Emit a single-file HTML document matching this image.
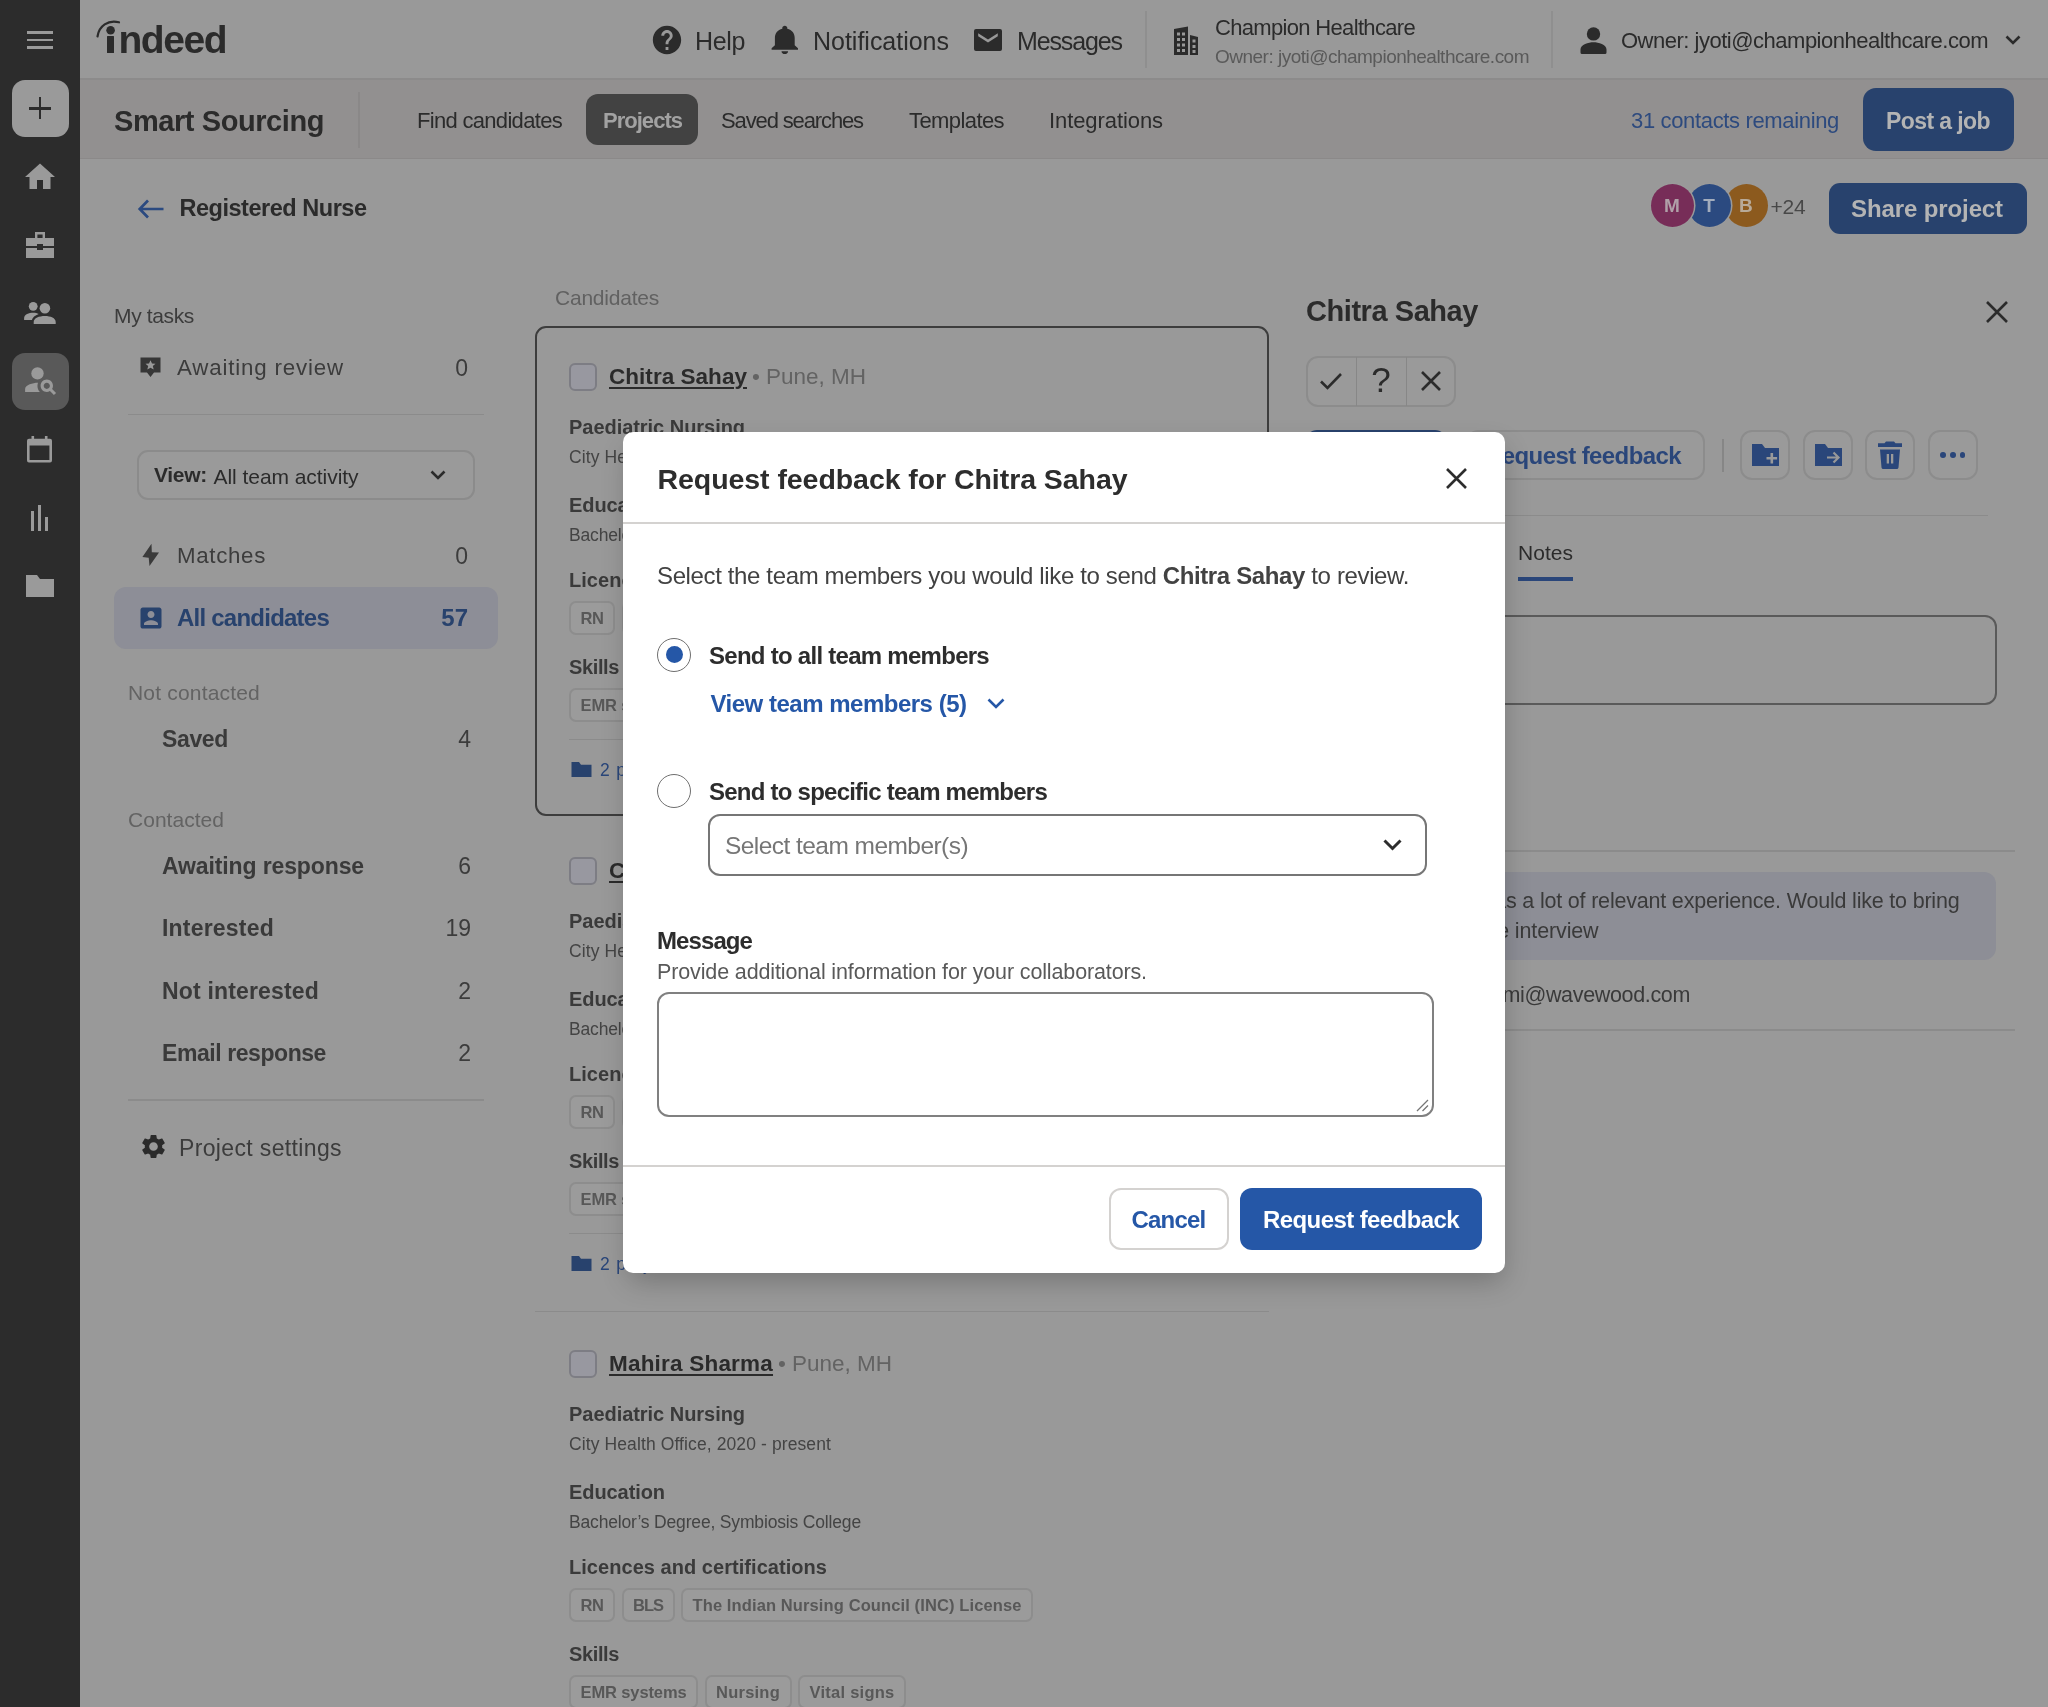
<!DOCTYPE html>
<html><head><meta charset="utf-8"><title>Smart Sourcing</title>
<style>
html,body{margin:0;padding:0}
html{width:2048px;height:1707px;overflow:hidden}
body{width:2048px;height:1707px;overflow:hidden;position:relative;background:#999999;font-family:"Liberation Sans", sans-serif;}
body div,body svg{position:absolute;box-sizing:border-box}
.t{white-space:nowrap}
#root{left:0;top:0;width:2048px;height:1707px;overflow:hidden;will-change:transform;}
</style></head><body><div id="root">
<div style="left:0px;top:0px;width:2048px;height:78px;background:#999999"></div>
<div style="left:80px;top:78px;width:1968px;height:2px;background:#8c8b8b"></div>
<div style="left:80px;top:80px;width:1968px;height:79px;background:#929090"></div>
<div style="left:80px;top:157.5px;width:1968px;height:1.5px;background:#8b8989"></div>
<div style="left:0px;top:0px;width:80px;height:1707px;background:#2c2c2c"></div>
<div style="left:27px;top:31px;width:26px;height:2.6px;background:#9a9a9a"></div>
<div style="left:27px;top:38.6px;width:26px;height:2.6px;background:#9a9a9a"></div>
<div style="left:27px;top:46px;width:26px;height:2.6px;background:#9a9a9a"></div>
<div style="left:11.5px;top:79.5px;width:57px;height:57px;background:#9a9a9a;border-radius:13px"></div>
<div style="left:29px;top:107px;width:22px;height:2.5px;background:#2c2c2c"></div>
<div style="left:38.8px;top:97px;width:2.5px;height:22px;background:#2c2c2c"></div>
<svg style="left:22px;top:159px;" width="36" height="36" viewBox="0 0 24 24"><path fill="#9a9a9a" d="M10 20v-6h4v6h5v-8h3L12 3 2 12h3v8z"/></svg>
<svg style="left:25px;top:231px;" width="30" height="28" viewBox="0 0 30 28"><path fill="#9a9a9a" d="M10 1h10v6h9v8h-11v-2h-6v2H1V7h9zM12.4 3.4V7h5.2V3.4zM1 17h11v2h6v-2h11v10H1z"/></svg>
<svg style="left:23px;top:300px;" width="34" height="26" viewBox="0 0 34 26"><circle cx="10.200" cy="6.300" r="4.400" fill="#9a9a9a"/><circle cx="21.900" cy="8.300" r="5.300" fill="#9a9a9a"/><path fill="#9a9a9a" d="M1.100 19.900v-1.500C1.100 14.500 6 12.800 10.200 12.800c2 0 4 .400 5.500 1.200C12 15.500 9.500 17.500 8.900 19.900zM10.700 24.100v-2.200c0-4 5.500-6 11.200-6s10.800 2 10.800 6v2.200z"/></svg>
<div style="left:11.5px;top:352.5px;width:57px;height:57px;background:#595959;border-radius:13px"></div>
<svg style="left:22.3px;top:360.6px;" width="37.2" height="37.2" viewBox="0 0 24 24"><circle cx="10" cy="8" r="4" fill="#9a9a9a"/><path fill="#9a9a9a" d="M10.35 14.01C7.62 13.91 2 15.27 2 18v2h9.54c-2.47-2.76-1.23-5.89-1.19-5.99zm9.08 4.01c.36-.59.57-1.28.57-2.02 0-2.21-1.79-4-4-4s-4 1.79-4 4 1.79 4 4 4c.74 0 1.43-.22 2.02-.57L20.59 22 22 20.59l-2.57-2.57zM16 18c-1.1 0-2-.9-2-2s.9-2 2-2 2 .9 2 2-.9 2-2 2z"/></svg>
<svg style="left:26px;top:436.3px;" width="27" height="26.5" viewBox="0 0 27 26.500"><path fill="#9a9a9a" fill-rule="evenodd" d="M5.500 0h2.600v2.800h10.800V0h2.600v2.800h2.500a2 2 0 0 1 2 2v19.700a2 2 0 0 1-2 2H3a2 2 0 0 1-2-2V4.800a2 2 0 0 1 2-2h2.500zM3.600 9.600v14.300h19.800V9.600z"/></svg>
<div style="left:31px;top:511px;width:3.4px;height:19.6px;background:#9a9a9a"></div>
<div style="left:38px;top:505px;width:3.4px;height:25.6px;background:#9a9a9a"></div>
<div style="left:45px;top:517px;width:3.4px;height:13.6px;background:#9a9a9a"></div>
<svg style="left:25px;top:574px;" width="30" height="24" viewBox="0 0 30 24"><path fill="#9a9a9a" d="M1 1h11l3 4h14v18H1z"/></svg>
<svg style="left:94px;top:16px;" width="136" height="44" viewBox="0 0 136 44">
<path d="M3.500 20.500 C5 10 14 3.500 25 6.300" fill="none" stroke="#2b2b2b" stroke-width="2.200" stroke-linecap="round"/>
<circle cx="16.600" cy="14.300" r="4.300" fill="#2b2b2b"/></svg>
<div style="left:107px;top:36.1px;width:7.3px;height:17px;background:#2b2b2b;border-radius:0.500px"></div>
<div class="t" style="left:118.5px;top:14.1px;font-size:39px;line-height:51px;color:#2b2b2b;font-weight:700;letter-spacing:-1.472px;">ndeed</div>
<svg style="left:649.8px;top:22.6px;" width="34" height="34" viewBox="0 0 24 24"><path fill="#2b2b2b" d="M12 2C6.48 2 2 6.48 2 12s4.48 10 10 10 10-4.48 10-10S17.52 2 12 2zm1 17h-2v-2h2v2zm2.07-7.75l-.9.92C13.45 12.9 13 13.5 13 15h-2v-.5c0-1.1.45-2.1 1.17-2.83l1.24-1.26c.37-.36.59-.86.59-1.41 0-1.1-.9-2-2-2s-2 .9-2 2H8c0-2.21 1.79-4 4-4s4 1.79 4 4c0 .88-.36 1.68-.93 2.25z"/></svg>
<div class="t" style="left:695.0px;top:24.5px;font-size:25px;line-height:32px;color:#2b2b2b;letter-spacing:-0.355px;">Help</div>
<svg style="left:765px;top:22px;" width="39.6" height="35" viewBox="0 0 24 24" preserveAspectRatio="none"><path fill="#2b2b2b" d="M12 22c1.1 0 2-.9 2-2h-4c0 1.1.89 2 2 2zm6-6v-5c0-3.07-1.64-5.64-4.5-6.32V4c0-.83-.67-1.5-1.5-1.5s-1.5.67-1.5 1.5v.68C7.63 5.36 6 7.920 6 11v5l-2 2v1h16v-1l-2-2z"/></svg>
<div class="t" style="left:813.0px;top:24.5px;font-size:25px;line-height:32px;color:#2b2b2b;letter-spacing:-0.013px;">Notifications</div>
<svg style="left:973px;top:28px;" width="30" height="24" viewBox="0 0 30 24"><path fill="#2b2b2b" d="M3 1h24a2 2 0 0 1 2 2v18a2 2 0 0 1-2 2H3a2 2 0 0 1-2-2V3a2 2 0 0 1 2-2zm2.2 4.2v3L15 14.5l9.8-6.3v-3L15 11.5z"/></svg>
<div class="t" style="left:1017.0px;top:24.5px;font-size:25px;line-height:32px;color:#2b2b2b;letter-spacing:-1.119px;">Messages</div>
<div style="left:1145px;top:11px;width:2px;height:57px;background:#8f8f8f"></div>
<svg style="left:1173px;top:26px;" width="26" height="30" viewBox="0 0 26 30"><path fill="#2b2b2b" fill-rule="evenodd" d="M1 3l14-2.5V29H1zM4 6.5h3v3H4zm5 0h3v3H9zM4 12h3v3H4zm5 0h3v3H9zM4 17.500h3v3H4zm5 0h3v3H9zM4 23h3v3H4zm5 0h3v3H9zM17 9l8 2v18h-8zm2.500 4.500h3v3h-3zm0 5.500h3v3h-3zm0 5h3v3h-3z"/></svg>
<div class="t" style="left:1215.0px;top:12.5px;font-size:22px;line-height:29px;color:#2b2b2b;letter-spacing:-0.673px;">Champion Healthcare</div>
<div class="t" style="left:1215.0px;top:44.0px;font-size:19px;line-height:25px;color:#5a5a5a;letter-spacing:-0.511px;">Owner: jyoti@championhealthcare.com</div>
<div style="left:1551px;top:11px;width:2px;height:57px;background:#8f8f8f"></div>
<svg style="left:1579.5px;top:26.5px;" width="27" height="27" viewBox="0 0 27 27"><circle cx="13.500" cy="6.900" r="6.700" fill="#2b2b2b"/><path fill="#2b2b2b" d="M0.500 25.500v-3c0-5 8-7.200 13-7.200s13 2.200 13 7.200v3a1.500 1.500 0 0 1-1.500 1.500h-23a1.500 1.500 0 0 1-1.500-1.500z"/></svg>
<div class="t" style="left:1621.0px;top:26.0px;font-size:22px;line-height:29px;color:#2b2b2b;letter-spacing:-0.494px;">Owner: jyoti@championhealthcare.com</div>
<svg style="left:2004px;top:34px;" width="18" height="12" viewBox="0 0 18 12"><path d="M2.500 2.500l6.500 6.500 6.500-6.500" fill="none" stroke="#2b2b2b" stroke-width="2.6"/></svg>
<div class="t" style="left:114.0px;top:101.5px;font-size:29px;line-height:38px;color:#2b2b2b;font-weight:700;letter-spacing:-0.424px;">Smart Sourcing</div>
<div style="left:358px;top:92px;width:2px;height:56px;background:#8a8888"></div>
<div class="t" style="left:417.0px;top:105.5px;font-size:22px;line-height:29px;color:#2b2b2b;letter-spacing:-0.689px;">Find candidates</div>
<div style="left:586px;top:94px;width:112px;height:51px;background:#424242;border-radius:12px"></div>
<div class="t" style="left:603.0px;top:105.5px;font-size:22px;line-height:29px;color:#a2a2a2;font-weight:700;letter-spacing:-0.979px;">Projects</div>
<div class="t" style="left:721.0px;top:105.5px;font-size:22px;line-height:29px;color:#2b2b2b;letter-spacing:-1.126px;">Saved searches</div>
<div class="t" style="left:909.0px;top:105.5px;font-size:22px;line-height:29px;color:#2b2b2b;letter-spacing:-0.587px;">Templates</div>
<div class="t" style="left:1049.0px;top:105.5px;font-size:22px;line-height:29px;color:#2b2b2b;letter-spacing:-0.081px;">Integrations</div>
<div class="t" style="left:1631.0px;top:105.5px;font-size:22px;line-height:29px;color:#2d4a7e;letter-spacing:-0.344px;">31 contacts remaining</div>
<div style="left:1863px;top:88px;width:151px;height:63px;background:#28426d;border-radius:13px"></div>
<div class="t" style="left:1886.0px;top:105.5px;font-size:23px;line-height:30px;color:#b4b4b4;font-weight:700;letter-spacing:-0.591px;">Post a job</div>
<svg style="left:136px;top:196.5px;" width="30" height="24" viewBox="0 0 30 24"><path d="M27.500 12H4M12 3.500L3.700 12l8.300 8.500" fill="none" stroke="#2b4a80" stroke-width="2.700"/></svg>
<div class="t" style="left:179.5px;top:193.3px;font-size:23.5px;line-height:31px;color:#2b2b2b;font-weight:700;letter-spacing:-0.476px;">Registered Nurse</div>
<div style="left:1724.8px;top:184px;width:43px;height:43px;background:#8c5a1e;border-radius:50%"></div>
<div style="left:1688px;top:184px;width:43px;height:43px;background:#2b4a80;border-radius:50%;box-shadow:0 0 0 1.500px #9a9a9a"></div>
<div style="left:1651px;top:184px;width:43px;height:43px;background:#772d58;border-radius:50%;box-shadow:0 0 0 1.500px #9a9a9a"></div>
<div class="t" style="left:1664.1px;top:193.0px;font-size:19px;line-height:25px;color:#b0a0a8;font-weight:700;">M</div>
<div class="t" style="left:1703.2px;top:193.0px;font-size:19px;line-height:25px;color:#a3adbd;font-weight:700;">T</div>
<div class="t" style="left:1739.1px;top:193.0px;font-size:19px;line-height:25px;color:#b8aa98;font-weight:700;">B</div>
<div class="t" style="left:1770.5px;top:193.0px;font-size:21px;line-height:27px;color:#484848;letter-spacing:-0.208px;">+24</div>
<div style="left:1829px;top:183px;width:198px;height:51px;background:#28426d;border-radius:11px"></div>
<div class="t" style="left:1851.0px;top:193.0px;font-size:24px;line-height:31px;color:#b4b4b4;font-weight:700;letter-spacing:-0.107px;">Share project</div>
<div class="t" style="left:114.0px;top:302.0px;font-size:21px;line-height:27px;color:#3c3c3c;letter-spacing:-0.355px;">My tasks</div>
<svg style="left:139px;top:356px;" width="23" height="23" viewBox="0 0 23 23"><path fill="#363636" fill-rule="evenodd" d="M1.500 1.500h20v15h-6.500l-3.500 4.500-3.500-4.500H1.500zM11.500 4.200l1.500 3.300 3.500.3-2.700 2.300.9 3.500-3.200-1.900-3.200 1.900.9-3.500-2.700-2.300 3.500-.3z"/></svg>
<div class="t" style="left:177.0px;top:353.3px;font-size:22.3px;line-height:29px;color:#3c3c3c;letter-spacing:0.833px;">Awaiting review</div>
<div class="t" style="left:455.2px;top:352.5px;font-size:23px;line-height:30px;color:#3c3c3c;">0</div>
<div style="left:128px;top:413.5px;width:356px;height:1.5px;background:#8b8b8b"></div>
<div style="left:137px;top:450px;width:338px;height:50px;border:2px solid #8b8b8b;border-radius:11px;background:#9a9a9a"></div>
<div class="t" style="left:154.0px;top:461.0px;font-size:21px;line-height:27px;color:#2b2b2b;font-weight:700;letter-spacing:-0.294px;">View:</div>
<div class="t" style="left:213.5px;top:462.5px;font-size:21px;line-height:27px;color:#2b2b2b;letter-spacing:-0.051px;">All team activity</div>
<svg style="left:429px;top:469px;" width="18" height="12" viewBox="0 0 18 12"><path d="M2.500 2.500l6.500 6.500 6.500-6.500" fill="none" stroke="#2b2b2b" stroke-width="2.600"/></svg>
<svg style="left:142px;top:543px;" width="18" height="24" viewBox="0 0 18 24"><path fill="#3a3a3a" d="M9.500 .800L.400 13.900l6.300.800.800 8.300L17 9.400l-7.200-.100z"/></svg>
<div class="t" style="left:177.0px;top:541.3px;font-size:22.3px;line-height:29px;color:#3c3c3c;letter-spacing:0.674px;">Matches</div>
<div class="t" style="left:455.2px;top:540.5px;font-size:23px;line-height:30px;color:#3c3c3c;">0</div>
<div style="left:114px;top:587px;width:384px;height:61.5px;background:#8d8e97;border-radius:12px"></div>
<svg style="left:136.7px;top:603.5px;" width="28" height="28" viewBox="0 0 24 24"><path fill="#28426d" d="M3 5v14c0 1.100.890 2 2 2h14c1.100 0 2-.900 2-2V5c0-1.100-.900-2-2-2H5c-1.110 0-2 .900-2 2zm12 4c0 1.660-1.340 3-3 3s-3-1.340-3-3 1.340-3 3-3 3 1.340 3 3zm-9 8c0-2 4-3.100 6-3.100s6 1.100 6 3.100v1H6v-1z"/></svg>
<div class="t" style="left:177.0px;top:602.0px;font-size:24px;line-height:31px;color:#28426d;font-weight:700;letter-spacing:-0.766px;">All candidates</div>
<div class="t" style="left:441.3px;top:602.0px;font-size:24px;line-height:31px;color:#28426d;font-weight:700;">57</div>
<div class="t" style="left:128.0px;top:679.0px;font-size:21px;line-height:27px;color:#636363;letter-spacing:0.185px;">Not contacted</div>
<div class="t" style="left:162.0px;top:723.5px;font-size:23px;line-height:30px;color:#3a3a3a;font-weight:700;letter-spacing:-0.353px;">Saved</div>
<div class="t" style="left:458.2px;top:723.5px;font-size:23px;line-height:30px;color:#3c3c3c;">4</div>
<div class="t" style="left:128.0px;top:805.5px;font-size:21px;line-height:27px;color:#636363;letter-spacing:0.030px;">Contacted</div>
<div class="t" style="left:162.0px;top:850.5px;font-size:23px;line-height:30px;color:#3a3a3a;font-weight:700;letter-spacing:-0.122px;">Awaiting response</div>
<div class="t" style="left:458.2px;top:850.5px;font-size:23px;line-height:30px;color:#3c3c3c;">6</div>
<div class="t" style="left:162.0px;top:913.0px;font-size:23px;line-height:30px;color:#3a3a3a;font-weight:700;letter-spacing:0.206px;">Interested</div>
<div class="t" style="left:445.4px;top:913.0px;font-size:23px;line-height:30px;color:#3c3c3c;">19</div>
<div class="t" style="left:162.0px;top:975.5px;font-size:23px;line-height:30px;color:#3a3a3a;font-weight:700;letter-spacing:0.169px;">Not interested</div>
<div class="t" style="left:458.2px;top:975.5px;font-size:23px;line-height:30px;color:#3c3c3c;">2</div>
<div class="t" style="left:162.0px;top:1038.0px;font-size:23px;line-height:30px;color:#3a3a3a;font-weight:700;letter-spacing:-0.431px;">Email response</div>
<div class="t" style="left:458.2px;top:1038.0px;font-size:23px;line-height:30px;color:#3c3c3c;">2</div>
<div style="left:128px;top:1099px;width:356px;height:1.5px;background:#8b8b8b"></div>
<svg style="left:139px;top:1132px;" width="29" height="29" viewBox="0 0 24 24"><path fill="#2b2b2b" d="M19.140 12.940c.040-.300.060-.610.060-.940 0-.320-.020-.640-.070-.940l2.030-1.580c.180-.140.230-.410.120-.610l-1.920-3.320c-.120-.220-.370-.290-.590-.220l-2.390.960c-.500-.380-1.030-.700-1.620-.940l-.360-2.540c-.040-.240-.240-.410-.480-.410h-3.840c-.240 0-.430.170-.470.410l-.360 2.540c-.590.240-1.130.570-1.620.940l-2.390-.960c-.220-.080-.470 0-.590.220L2.740 8.870c-.120.210-.080.470.120.610l2.030 1.580c-.050.300-.090.630-.090.940s.020.640.070.940l-2.030 1.580c-.180.140-.230.410-.120.610l1.920 3.320c.120.220.370.290.590.220l2.390-.960c.500.380 1.030.700 1.620.940l.360 2.540c.050.240.240.410.480.410h3.840c.240 0 .440-.170.470-.410l.360-2.540c.590-.240 1.130-.560 1.620-.940l2.390.960c.220.080.470 0 .590-.220l1.920-3.320c.120-.220.070-.470-.120-.610l-2.010-1.580zM12 15.600c-1.980 0-3.600-1.620-3.600-3.600s1.620-3.600 3.600-3.600 3.600 1.620 3.600 3.600-1.620 3.600-3.600 3.600z"/></svg>
<div class="t" style="left:179.0px;top:1132.5px;font-size:23px;line-height:30px;color:#3c3c3c;letter-spacing:0.359px;">Project settings</div>
<div class="t" style="left:555.0px;top:284.0px;font-size:21px;line-height:27px;color:#616161;letter-spacing:-0.225px;">Candidates</div>
<div style="left:535px;top:326px;width:734px;height:490px;border:2px solid #3d3d3d;border-radius:11px"></div>
<div style="left:569px;top:362.5px;width:28px;height:28px;border:2px solid #7d7d84;border-radius:6px;background:#9898a0"></div>
<div class="t" style="left:609.0px;top:361.5px;font-size:22.5px;line-height:29px;color:#2b2b2b;font-weight:700;letter-spacing:0.036px;text-decoration:underline;text-decoration-thickness:2px;text-underline-offset:3px;">Chitra Sahay</div>
<div class="t" style="left:752.0px;top:361.5px;font-size:22.5px;line-height:29px;color:#636363;letter-spacing:-0.017px;">• Pune, MH</div>
<div class="t" style="left:569.0px;top:413.5px;font-size:20px;line-height:26px;color:#3a3a3a;font-weight:700;letter-spacing:-0.040px;">Paediatric Nursing</div>
<div class="t" style="left:569.0px;top:446.0px;font-size:17.5px;line-height:23px;color:#444444;letter-spacing:0.105px;">City Health Office, 2020 - present</div>
<div class="t" style="left:569.0px;top:491.5px;font-size:20px;line-height:26px;color:#3a3a3a;font-weight:700;letter-spacing:-0.075px;">Education</div>
<div class="t" style="left:569.0px;top:524.0px;font-size:17.5px;line-height:23px;color:#444444;letter-spacing:-0.166px;">Bachelor’s Degree, Symbiosis College</div>
<div class="t" style="left:569.0px;top:567.0px;font-size:20px;line-height:26px;color:#3a3a3a;font-weight:700;letter-spacing:0.046px;">Licences and certifications</div>
<div style="left:569px;top:601.0px;width:46px;height:33.5px;border:2px solid #8d8d8d;border-radius:7px;background:#9b9b9b"></div>
<div class="t" style="left:580.5px;top:607.5px;font-size:16.5px;line-height:21px;color:#585858;font-weight:700;letter-spacing:-0.422px;">RN</div>
<div style="left:621.5px;top:601.0px;width:53px;height:33.5px;border:2px solid #8d8d8d;border-radius:7px;background:#9b9b9b"></div>
<div class="t" style="left:633.0px;top:607.5px;font-size:16.5px;line-height:21px;color:#585858;font-weight:700;letter-spacing:-1.000px;">BLS</div>
<div style="left:681.0px;top:601.0px;width:352px;height:33.5px;border:2px solid #8d8d8d;border-radius:7px;background:#9b9b9b"></div>
<div class="t" style="left:692.5px;top:607.5px;font-size:16.5px;line-height:21px;color:#585858;font-weight:700;letter-spacing:0.112px;">The Indian Nursing Council (INC) License</div>
<div class="t" style="left:569.0px;top:654.0px;font-size:20px;line-height:26px;color:#3a3a3a;font-weight:700;letter-spacing:-0.378px;">Skills</div>
<div style="left:569px;top:688.0px;width:129px;height:33.5px;border:2px solid #8d8d8d;border-radius:7px;background:#9b9b9b"></div>
<div class="t" style="left:580.5px;top:694.5px;font-size:16.5px;line-height:21px;color:#585858;font-weight:700;letter-spacing:-0.119px;">EMR systems</div>
<div style="left:704.5px;top:688.0px;width:87px;height:33.5px;border:2px solid #8d8d8d;border-radius:7px;background:#9b9b9b"></div>
<div class="t" style="left:716.0px;top:694.5px;font-size:16.5px;line-height:21px;color:#585858;font-weight:700;letter-spacing:0.237px;">Nursing</div>
<div style="left:798.0px;top:688.0px;width:108px;height:33.5px;border:2px solid #8d8d8d;border-radius:7px;background:#9b9b9b"></div>
<div class="t" style="left:809.5px;top:694.5px;font-size:16.5px;line-height:21px;color:#585858;font-weight:700;letter-spacing:0.251px;">Vital signs</div>
<div style="left:569px;top:738.5px;width:666px;height:1.5px;background:#8b8b8b"></div>
<svg style="left:571px;top:762.0px;" width="21" height="15" viewBox="0 0 21 15"><path fill="#28426d" d="M.500 0h7.500l2 2.800h10.500V15H.500z"/></svg>
<div class="t" style="left:600.0px;top:758.5px;font-size:17.5px;line-height:23px;color:#2a467a;letter-spacing:0.812px;">2 projects</div>
<div style="left:569px;top:856.5px;width:28px;height:28px;border:2px solid #7d7d84;border-radius:6px;background:#9898a0"></div>
<div class="t" style="left:609.0px;top:855.5px;font-size:22.5px;line-height:29px;color:#2b2b2b;font-weight:700;letter-spacing:0.036px;text-decoration:underline;text-decoration-thickness:2px;text-underline-offset:3px;">Chitra Sahay</div>
<div class="t" style="left:752.0px;top:855.5px;font-size:22.5px;line-height:29px;color:#636363;letter-spacing:-0.017px;">• Pune, MH</div>
<div class="t" style="left:569.0px;top:907.5px;font-size:20px;line-height:26px;color:#3a3a3a;font-weight:700;letter-spacing:-0.040px;">Paediatric Nursing</div>
<div class="t" style="left:569.0px;top:940.0px;font-size:17.5px;line-height:23px;color:#444444;letter-spacing:0.105px;">City Health Office, 2020 - present</div>
<div class="t" style="left:569.0px;top:985.5px;font-size:20px;line-height:26px;color:#3a3a3a;font-weight:700;letter-spacing:-0.075px;">Education</div>
<div class="t" style="left:569.0px;top:1018.0px;font-size:17.5px;line-height:23px;color:#444444;letter-spacing:-0.166px;">Bachelor’s Degree, Symbiosis College</div>
<div class="t" style="left:569.0px;top:1061.0px;font-size:20px;line-height:26px;color:#3a3a3a;font-weight:700;letter-spacing:0.046px;">Licences and certifications</div>
<div style="left:569px;top:1095.0px;width:46px;height:33.5px;border:2px solid #8d8d8d;border-radius:7px;background:#9b9b9b"></div>
<div class="t" style="left:580.5px;top:1101.5px;font-size:16.5px;line-height:21px;color:#585858;font-weight:700;letter-spacing:-0.422px;">RN</div>
<div style="left:621.5px;top:1095.0px;width:53px;height:33.5px;border:2px solid #8d8d8d;border-radius:7px;background:#9b9b9b"></div>
<div class="t" style="left:633.0px;top:1101.5px;font-size:16.5px;line-height:21px;color:#585858;font-weight:700;letter-spacing:-1.000px;">BLS</div>
<div style="left:681.0px;top:1095.0px;width:352px;height:33.5px;border:2px solid #8d8d8d;border-radius:7px;background:#9b9b9b"></div>
<div class="t" style="left:692.5px;top:1101.5px;font-size:16.5px;line-height:21px;color:#585858;font-weight:700;letter-spacing:0.112px;">The Indian Nursing Council (INC) License</div>
<div class="t" style="left:569.0px;top:1148.0px;font-size:20px;line-height:26px;color:#3a3a3a;font-weight:700;letter-spacing:-0.378px;">Skills</div>
<div style="left:569px;top:1182.0px;width:129px;height:33.5px;border:2px solid #8d8d8d;border-radius:7px;background:#9b9b9b"></div>
<div class="t" style="left:580.5px;top:1188.5px;font-size:16.5px;line-height:21px;color:#585858;font-weight:700;letter-spacing:-0.119px;">EMR systems</div>
<div style="left:704.5px;top:1182.0px;width:87px;height:33.5px;border:2px solid #8d8d8d;border-radius:7px;background:#9b9b9b"></div>
<div class="t" style="left:716.0px;top:1188.5px;font-size:16.5px;line-height:21px;color:#585858;font-weight:700;letter-spacing:0.237px;">Nursing</div>
<div style="left:798.0px;top:1182.0px;width:108px;height:33.5px;border:2px solid #8d8d8d;border-radius:7px;background:#9b9b9b"></div>
<div class="t" style="left:809.5px;top:1188.5px;font-size:16.5px;line-height:21px;color:#585858;font-weight:700;letter-spacing:0.251px;">Vital signs</div>
<div style="left:569px;top:1232.5px;width:666px;height:1.5px;background:#8b8b8b"></div>
<svg style="left:571px;top:1256.0px;" width="21" height="15" viewBox="0 0 21 15"><path fill="#28426d" d="M.500 0h7.500l2 2.800h10.500V15H.500z"/></svg>
<div class="t" style="left:600.0px;top:1252.5px;font-size:17.5px;line-height:23px;color:#2a467a;letter-spacing:0.812px;">2 projects</div>
<div style="left:535px;top:1310.5px;width:734px;height:1.5px;background:#8b8b8b"></div>
<div style="left:569px;top:1349.5px;width:28px;height:28px;border:2px solid #7d7d84;border-radius:6px;background:#9898a0"></div>
<div class="t" style="left:609.0px;top:1348.5px;font-size:22.5px;line-height:29px;color:#2b2b2b;font-weight:700;letter-spacing:0.207px;text-decoration:underline;text-decoration-thickness:2px;text-underline-offset:3px;">Mahira Sharma</div>
<div class="t" style="left:778.0px;top:1348.5px;font-size:22.5px;line-height:29px;color:#636363;letter-spacing:-0.017px;">• Pune, MH</div>
<div class="t" style="left:569.0px;top:1400.5px;font-size:20px;line-height:26px;color:#3a3a3a;font-weight:700;letter-spacing:-0.040px;">Paediatric Nursing</div>
<div class="t" style="left:569.0px;top:1433.0px;font-size:17.5px;line-height:23px;color:#444444;letter-spacing:0.105px;">City Health Office, 2020 - present</div>
<div class="t" style="left:569.0px;top:1478.5px;font-size:20px;line-height:26px;color:#3a3a3a;font-weight:700;letter-spacing:-0.075px;">Education</div>
<div class="t" style="left:569.0px;top:1511.0px;font-size:17.5px;line-height:23px;color:#444444;letter-spacing:-0.166px;">Bachelor’s Degree, Symbiosis College</div>
<div class="t" style="left:569.0px;top:1554.0px;font-size:20px;line-height:26px;color:#3a3a3a;font-weight:700;letter-spacing:0.046px;">Licences and certifications</div>
<div style="left:569px;top:1588.0px;width:46px;height:33.5px;border:2px solid #8d8d8d;border-radius:7px;background:#9b9b9b"></div>
<div class="t" style="left:580.5px;top:1594.5px;font-size:16.5px;line-height:21px;color:#585858;font-weight:700;letter-spacing:-0.422px;">RN</div>
<div style="left:621.5px;top:1588.0px;width:53px;height:33.5px;border:2px solid #8d8d8d;border-radius:7px;background:#9b9b9b"></div>
<div class="t" style="left:633.0px;top:1594.5px;font-size:16.5px;line-height:21px;color:#585858;font-weight:700;letter-spacing:-1.000px;">BLS</div>
<div style="left:681.0px;top:1588.0px;width:352px;height:33.5px;border:2px solid #8d8d8d;border-radius:7px;background:#9b9b9b"></div>
<div class="t" style="left:692.5px;top:1594.5px;font-size:16.5px;line-height:21px;color:#585858;font-weight:700;letter-spacing:0.112px;">The Indian Nursing Council (INC) License</div>
<div class="t" style="left:569.0px;top:1641.0px;font-size:20px;line-height:26px;color:#3a3a3a;font-weight:700;letter-spacing:-0.378px;">Skills</div>
<div style="left:569px;top:1675.0px;width:129px;height:33.5px;border:2px solid #8d8d8d;border-radius:7px;background:#9b9b9b"></div>
<div class="t" style="left:580.5px;top:1681.5px;font-size:16.5px;line-height:21px;color:#585858;font-weight:700;letter-spacing:-0.119px;">EMR systems</div>
<div style="left:704.5px;top:1675.0px;width:87px;height:33.5px;border:2px solid #8d8d8d;border-radius:7px;background:#9b9b9b"></div>
<div class="t" style="left:716.0px;top:1681.5px;font-size:16.5px;line-height:21px;color:#585858;font-weight:700;letter-spacing:0.237px;">Nursing</div>
<div style="left:798.0px;top:1675.0px;width:108px;height:33.5px;border:2px solid #8d8d8d;border-radius:7px;background:#9b9b9b"></div>
<div class="t" style="left:809.5px;top:1681.5px;font-size:16.5px;line-height:21px;color:#585858;font-weight:700;letter-spacing:0.251px;">Vital signs</div>
<div class="t" style="left:1306.0px;top:292.0px;font-size:29px;line-height:38px;color:#2b2b2b;font-weight:700;letter-spacing:-0.441px;">Chitra Sahay</div>
<svg style="left:1985px;top:299.5px;" width="24" height="24" viewBox="0 0 24 24"><path d="M2 2l20 20M22 2L2 22" stroke="#2b2b2b" stroke-width="2.600" fill="none"/></svg>
<div style="left:1306px;top:356px;width:150px;height:50.5px;border:2px solid #8c8c8c;border-radius:12px;background:#9a9a9a"></div>
<div style="left:1355.5px;top:357px;width:1.5px;height:48.5px;background:#878787"></div>
<div style="left:1405.5px;top:357px;width:1.5px;height:48.5px;background:#878787"></div>
<svg style="left:1319px;top:371px;" width="24" height="20" viewBox="0 0 24 20"><path d="M2 10.500l6.500 6.500L22 3" stroke="#2b2b2b" stroke-width="2.600" fill="none"/></svg>
<div class="t" style="left:1371.3px;top:357.0px;font-size:35px;line-height:46px;color:#2b2b2b;">?</div>
<svg style="left:1420px;top:370px;" width="22" height="22" viewBox="0 0 22 22"><path d="M2 2l18 18M20 2L2 20" stroke="#2b2b2b" stroke-width="2.600" fill="none"/></svg>
<div style="left:1306px;top:430px;width:140px;height:50px;background:#28426d;border-radius:11px"></div>
<div style="left:1466px;top:430px;width:239px;height:50px;border:2px solid #8c8c8c;border-radius:12px;background:#9a9a9a"></div>
<div class="t" style="left:1485.0px;top:440.0px;font-size:24px;line-height:31px;color:#2a467a;font-weight:700;letter-spacing:-0.588px;">Request feedback</div>
<div style="left:1722px;top:439px;width:1.5px;height:33px;background:#868686"></div>
<div style="left:1740px;top:430px;width:50px;height:50px;border:2px solid #8c8c8c;border-radius:12px;background:#9a9a9a"></div>
<div style="left:1802.5px;top:430px;width:50px;height:50px;border:2px solid #8c8c8c;border-radius:12px;background:#9a9a9a"></div>
<div style="left:1865px;top:430px;width:50px;height:50px;border:2px solid #8c8c8c;border-radius:12px;background:#9a9a9a"></div>
<div style="left:1927.5px;top:430px;width:50px;height:50px;border:2px solid #8c8c8c;border-radius:12px;background:#9a9a9a"></div>
<svg style="left:1751px;top:443px;" width="29" height="24" viewBox="0 0 29 24"><path fill="#2a467a" fill-rule="evenodd" d="M1 1h10l3 4h14v18H1zM19.500 10v4h-4v2.600h4v4h2.600v-4h4V14h-4v-4z"/></svg>
<svg style="left:1813.5px;top:443px;" width="29" height="24" viewBox="0 0 29 24"><path fill="#2a467a" fill-rule="evenodd" d="M1 1h10l3 4h14v18H1z"/><path d="M13 14.500h11M19.500 9.500l5 5-5 5" fill="none" stroke="#989898" stroke-width="2.200"/></svg>
<svg style="left:1877px;top:440px;" width="26" height="30" viewBox="0 0 26 30"><path fill="#2a467a" fill-rule="evenodd" d="M9 1.500h8l1.500 1.800H25v3.700H1V3.300h6.500zM3 9.500h20l-1.500 18a1.800 1.800 0 0 1-1.800 1.600H6.300a1.800 1.800 0 0 1-1.800-1.600zM9.700 14v9.500h2.300V14zm4.300 0v9.500h2.300V14z"/></svg>
<div style="left:1939.8px;top:452.3px;width:5.8px;height:5.8px;background:#2a467a;border-radius:50%"></div>
<div style="left:1949.8px;top:452.3px;width:5.8px;height:5.8px;background:#2a467a;border-radius:50%"></div>
<div style="left:1959.6999999999998px;top:452.3px;width:5.8px;height:5.8px;background:#2a467a;border-radius:50%"></div>
<div style="left:1505px;top:514.5px;width:483px;height:1.5px;background:#8b8b8b"></div>
<div class="t" style="left:1518.0px;top:538.5px;font-size:21px;line-height:27px;color:#2b2b2b;letter-spacing:0.028px;">Notes</div>
<div style="left:1517.5px;top:577px;width:55.5px;height:3.5px;background:#2a467a"></div>
<div style="left:1306px;top:615px;width:690.5px;height:90px;border:2px solid #5a5a5a;border-radius:12px"></div>
<div style="left:1306px;top:850px;width:708.5px;height:1.5px;background:#8b8b8b"></div>
<div style="left:1306px;top:872px;width:689.5px;height:88px;background:#8d8e96;border-radius:12px"></div>
<div class="t" style="left:1482.5px;top:886.5px;font-size:21.5px;line-height:28px;color:#3a3a3a;letter-spacing:-0.193px;">has a lot of relevant experience. Would like to bring</div>
<div class="t" style="left:1479.5px;top:916.5px;font-size:21.5px;line-height:28px;color:#3a3a3a;letter-spacing:-0.131px;">the interview</div>
<div class="t" style="left:1462.0px;top:981.0px;font-size:21.5px;line-height:28px;color:#3a3a3a;letter-spacing:-0.344px;">sharmi@wavewood.com</div>
<div style="left:1306px;top:1029px;width:708.5px;height:1.5px;background:#8b8b8b"></div>
<div style="left:623px;top:432px;width:882px;height:841px;background:#fff;border-radius:10px;box-shadow:2px 12px 28px -4px rgba(0,0,0,.24)"></div>
<div class="t" style="left:657.5px;top:461.0px;font-size:28.5px;line-height:37px;color:#2d2d2d;font-weight:700;letter-spacing:-0.060px;">Request feedback for Chitra Sahay</div>
<svg style="left:1445px;top:466.5px;" width="23" height="23" viewBox="0 0 23 23"><path d="M2 2l19 19M21 2L2 21" stroke="#2d2d2d" stroke-width="2.600" fill="none"/></svg>
<div style="left:623px;top:521.5px;width:882px;height:2px;background:#d4d2d0"></div>
<div class="t" style="left:657.0px;top:560.0px;font-size:24px;line-height:31px;color:#424242;letter-spacing:-0.367px;">Select the team members you would like to send <b>Chitra Sahay</b> to review.</div>
<div style="left:657.2px;top:637.6px;width:34px;height:34px;border:1.500px solid #6f6f6f;border-radius:50%;background:#fff"></div>
<div style="left:665.7px;top:646.1px;width:17px;height:17px;background:#2557a7;border-radius:50%"></div>
<div class="t" style="left:709.0px;top:639.5px;font-size:24px;line-height:31px;color:#2d2d2d;font-weight:700;letter-spacing:-0.727px;">Send to all team members</div>
<div class="t" style="left:710.5px;top:688.0px;font-size:24px;line-height:31px;color:#2557a7;font-weight:700;letter-spacing:-0.493px;">View team members (5)</div>
<svg style="left:986px;top:697px;" width="20" height="13" viewBox="0 0 20 13"><path d="M2.500 2.500l7.500 7.500 7.500-7.500" fill="none" stroke="#2557a7" stroke-width="2.600"/></svg>
<div style="left:657.2px;top:773.8px;width:34px;height:34px;border:1.500px solid #6f6f6f;border-radius:50%;background:#fff"></div>
<div class="t" style="left:709.0px;top:776.0px;font-size:24px;line-height:31px;color:#2d2d2d;font-weight:700;letter-spacing:-0.763px;">Send to specific team members</div>
<div style="left:708px;top:814px;width:718.5px;height:62px;border:2px solid #767676;border-radius:12px;background:#fff"></div>
<div class="t" style="left:725.0px;top:829.5px;font-size:24.5px;line-height:32px;color:#767676;letter-spacing:-0.553px;">Select team member(s)</div>
<svg style="left:1382px;top:838px;" width="21" height="14" viewBox="0 0 21 14"><path d="M2.500 2.500l8 8 8-8" fill="none" stroke="#2d2d2d" stroke-width="3"/></svg>
<div class="t" style="left:657.0px;top:924.5px;font-size:24px;line-height:31px;color:#2d2d2d;font-weight:700;letter-spacing:-0.913px;">Message</div>
<div class="t" style="left:657.0px;top:958.0px;font-size:21.5px;line-height:28px;color:#595959;letter-spacing:-0.133px;">Provide additional information for your collaborators.</div>
<div style="left:657px;top:991.5px;width:776.5px;height:125px;border:2px solid #808080;border-radius:12px;background:#fff"></div>
<svg style="left:1415px;top:1098px;" width="14" height="14" viewBox="0 0 14 14"><path d="M2 13L13 2M7.500 13L13 7.500" stroke="#767676" stroke-width="1.300" fill="none"/></svg>
<div style="left:623px;top:1164.5px;width:882px;height:2px;background:#d4d2d0"></div>
<div style="left:1109px;top:1188px;width:119.5px;height:62px;border:2px solid #d4d2d0;border-radius:12px;background:#fff"></div>
<div class="t" style="left:1131.5px;top:1204.0px;font-size:24px;line-height:31px;color:#2557a7;font-weight:700;letter-spacing:-0.784px;">Cancel</div>
<div style="left:1240px;top:1188px;width:242px;height:62px;background:#2557a7;border-radius:12px"></div>
<div class="t" style="left:1263.0px;top:1204.0px;font-size:24px;line-height:31px;color:#fff;font-weight:700;letter-spacing:-0.588px;">Request feedback</div>
</div></body></html>
